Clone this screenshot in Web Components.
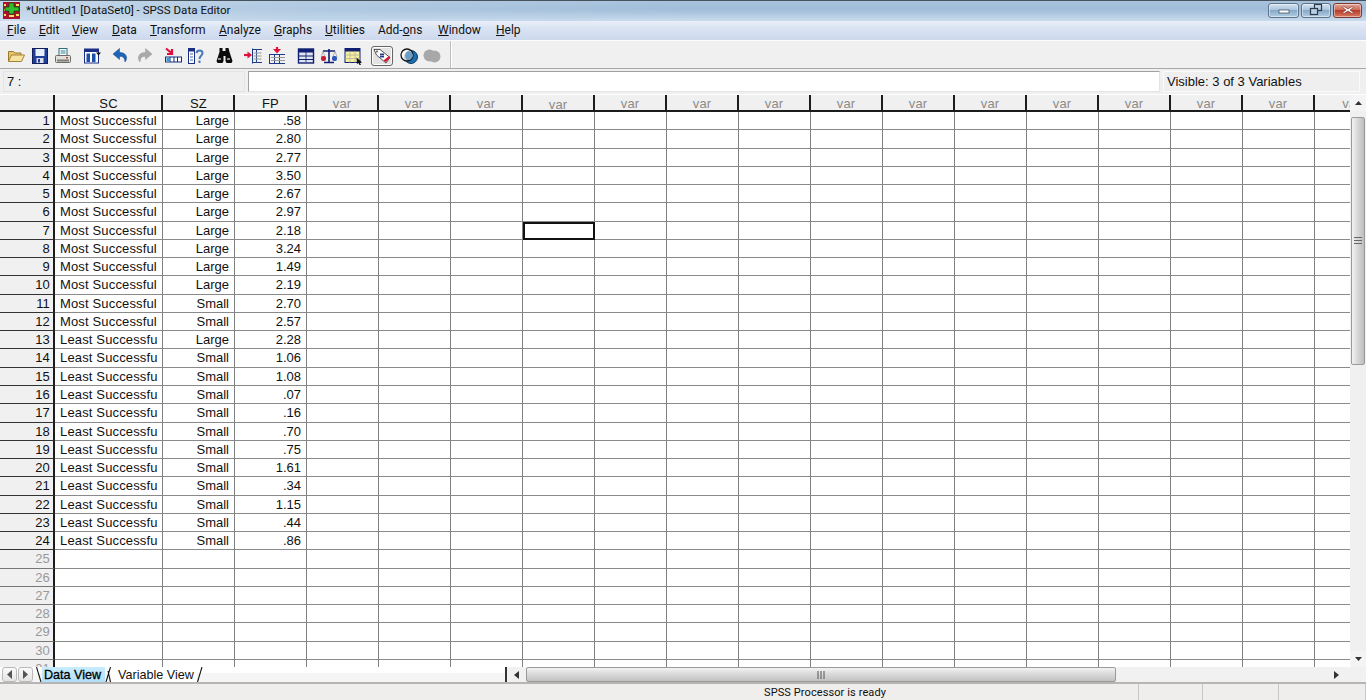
<!DOCTYPE html>
<html lang="en"><head><meta charset="utf-8"><title>SPSS Data Editor</title>
<style>html,body{margin:0;padding:0;background:#f0f0f0;overflow:hidden;width:1366px;height:700px}</style>
</head><body>
<spss-window>
  <title-bar slot="title">*Untitled1 [DataSet0] - SPSS Data Editor</title-bar>
  <menu-bar slot="menu"></menu-bar>
  <tool-bar slot="tools"></tool-bar>
  <cell-bar slot="cell" cell="7 :" visible="Visible: 3 of 3 Variables"></cell-bar>
  <data-grid slot="grid"></data-grid>
  <v-scroll slot="vscroll"></v-scroll>
  <tab-strip slot="tabs"></tab-strip>
  <status-bar slot="status">SPSS Processor is ready</status-bar>
</spss-window>
<script>
function def(name,css,html){
  customElements.define(name,class extends HTMLElement{
    connectedCallback(){
      if(this.shadowRoot)return;
      const r=this.attachShadow({mode:'open'});
      r.innerHTML='<style>'+css+'</style>'+(typeof html==='function'?html(this):html);
    }
  });
}
def('spss-window',`
:host{display:grid;width:1366px;height:700px;grid-template-columns:1350px 16px;grid-template-rows:21px 20px 28px 26px 572px 17px 16px;overflow:hidden;font-family:"Liberation Sans",Arial,sans-serif}
.w{grid-column:1/3}
`,`<div class="w"><slot name="title"></slot></div><div class="w"><slot name="menu"></slot></div><div class="w"><slot name="tools"></slot></div><div class="w"><slot name="cell"></slot></div><slot name="grid"></slot><slot name="vscroll"></slot><div class="w"><slot name="tabs"></slot></div><div class="w"><slot name="status"></slot></div>`);

def('title-bar',`
:host{display:flex;height:21px;box-sizing:border-box;align-items:center;background:linear-gradient(180deg,#46535f 0,#46535f 1px,#a9c3dc 1px,#9fbcd9 9px,#b7cde3 16px,#c9dcee 21px);position:relative}
.bg{position:absolute;inset:1px 0 0 0;background:linear-gradient(90deg,rgba(205,222,238,.75) 0,rgba(190,212,232,.55) 300px,rgba(170,198,224,0) 700px)}
.ic{margin-left:3px;width:17px;height:17px;flex:none;position:relative;display:block}
.t{position:relative;margin-left:6px;font:11.6px/21px Roboto,"Noto Sans",sans-serif;color:#111;white-space:nowrap;flex:1}
.btns{position:relative;display:flex;gap:2px;margin-right:4px;margin-top:-1px}
.b{width:30px;height:15px;box-sizing:border-box;border:1px solid #5e7389;border-radius:3px;background:linear-gradient(180deg,#d3e2f0 0,#aac4dc 45%,#88a9c8 50%,#b3cde2 100%);box-shadow:inset 0 0 0 1px rgba(255,255,255,.45);display:flex;align-items:center;justify-content:center}
.x{background:linear-gradient(180deg,#e2a598 0,#cf6a58 45%,#b63d2c 50%,#d87a62 100%);border-color:#7a3a32}
`,`<div class="bg"></div><svg class="ic" viewBox="0 0 17 17"><rect width="17" height="17" fill="#b01030"/><g fill="#f4e25a"><rect x="1" y="2" width="2" height="2"/><rect x="1" y="7" width="2" height="2"/><rect x="1" y="12" width="2" height="2"/><rect x="13" y="2" width="3" height="2"/><rect x="13" y="7" width="3" height="2"/><rect x="13" y="12" width="3" height="2"/><rect x="6" y="13" width="5" height="2"/></g><path d="M6 1h5v4h5v4h-5v3H6V9H2V5h4z" fill="#2fbf2f" stroke="#0b4d0b" stroke-width=".8"/></svg><div class="t"><slot></slot></div><div class="btns"><div class="b" style="width:31px"><svg width="12" height="8"><rect x="1" y="4" width="10" height="3" fill="#fff" stroke="#44566a" stroke-width=".8"/></svg></div><div class="b"><svg width="14" height="12"><rect x="5.500" y=".5" width="7" height="6" fill="none" stroke="#2d3c4c" stroke-width="1.200"/><rect x="1.500" y="4.500" width="7" height="6" fill="#b8cde2" stroke="#2d3c4c" stroke-width="1.200"/></svg></div><div class="b x" style="width:29px"><svg width="14" height="10"><path d="M3 1.500l4 2.500 4-2.500 1.500 1-3.500 2.500 3.500 2.500-1.500 1-4-2.500-4 2.500-1.500-1 3.500-2.500-3.500-2.500z" fill="#fff" stroke="#6d2a22" stroke-width=".6"/></svg></div></div>`);

const menus=[['F','ile',32],['E','dit',33],['V','iew',40],['D','ata',38],['T','ransform',69],['A','nalyze',55],['G','raphs',51],['U','tilities',53],['Add-','o','ns',60],['W','indow',58],['H','elp',50]];
def('menu-bar',`
:host{display:flex;height:20px;box-sizing:border-box;padding-left:7px;background:linear-gradient(180deg,#e9eff8 0,#dbe4f3 35%,#cdd8ee 100%);border-bottom:1px solid #fbfcfe;font:12px/19px Roboto,"Noto Sans",sans-serif;color:#111}
span{display:block;white-space:nowrap;flex:none}
u{text-underline-offset:1px}
`,()=>menus.map(m=>m.length===4?`<span style="width:${m[3]}px">${m[0]}<u>${m[1]}</u>${m[2]}</span>`:`<span style="width:${m[2]}px"><u>${m[0]}</u>${m[1]}</span>`).join(''));

const icons=[
`<path d="M1.500 14.500V4.500h5l1.500 1.500h6V8" fill="#e7c568" stroke="#9a7a2a"/><path d="M1.500 14.500L4.500 8H17.500l-3 6.500z" fill="#f7e3a0" stroke="#a4823a"/>`,
`<rect x="1.500" y="1.500" width="15" height="15" fill="#1f3f9a" stroke="#101f5c"/><rect x="4.500" y="2" width="9" height="7" fill="#e8eefa"/><rect x="5.500" y="11" width="7" height="5" fill="#d9dee9"/><rect x="7" y="12" width="2" height="3.500" fill="#1f3f9a"/>`,
`<rect x="5" y="1.500" width="8" height="7" fill="#fff" stroke="#2f6f80"/><path d="M6.500 4h5M6.500 6h5" stroke="#2f7f90"/><rect x="1.500" y="8.500" width="15" height="7" rx="1" fill="#e0e0d8" stroke="#6b6b66"/><rect x="3" y="12.500" width="12" height="2" fill="#7c7c78"/><rect x="12" y="10" width="2" height="1.500" fill="#b44"/>`,
`<rect x="1.500" y="2" width="14" height="14" fill="#fff" stroke="#1c2f86"/><rect x="1.500" y="2" width="14" height="3" fill="#1c2f86"/><rect x="3.500" y="6.500" width="3.500" height="8.500" fill="#1c4fa8"/><rect x="9" y="6.500" width="3.500" height="8.500" fill="#1c4fa8"/><path d="M13 5.500h5l-2.500 3z" fill="#111"/>`,
`<path d="M7.500 1.500L1 7l6.500 5.500V9.500c3.500-.4 5 1 5.500 5.500C17 10 13 5 7.500 5.500z" fill="#1d64b8" stroke="#0f4a90" stroke-width=".5"/>`,
`<path d="M10.500 1.500L17 7l-6.500 5.500V9.500c-3.500-.4-5 1-5.500 5.500C1 10 5 5 10.500 5.500z" fill="#a9a9a9" stroke="#9a9a9a" stroke-width=".5"/>`,
`<path d="M2 1.500l6 5M8 2v5H3" stroke="#e0103a" stroke-width="2.200" fill="none"/><rect x="1.500" y="10" width="16" height="5" fill="#fff" stroke="#0f2f7f"/><path d="M6 10v5M10 10v5M13.500 10v5" stroke="#0f2f7f"/><rect x="2.500" y="11" width="3" height="3" fill="#2e9bd6"/>`,
`<rect x="1.500" y="1.500" width="6" height="15" fill="#fff" stroke="#1c2f86"/><rect x="1.500" y="1.500" width="6" height="3" fill="#1c2f86"/><path d="M3 7h3M3 10h3M3 13h3" stroke="#46a"/><path d="M9.500 6c.5-3.500 6-3.500 6 0 0 3-3 2.500-3 6" fill="none" stroke="#4a78b8" stroke-width="2"/><rect x="11.500" y="13.500" width="2" height="2.500" fill="#4a78b8"/>`,
`<path d="M4.500 1h3v3h3V1h3l1 4 3 9-1 2h-5l-1-2V9h-2v5l-1 2h-5l-1-2 3-9z" fill="#0c0c0c"/><rect x="3" y="11" width="3" height="2" fill="#fff" opacity=".55"/><rect x="12" y="11" width="3" height="2" fill="#fff" opacity=".55"/>`,
`<path d="M0 8h4.500" stroke="#e0103a" stroke-width="2.200"/><path d="M3.500 4.500l4.500 3.500-4.500 3.500z" fill="#e0103a"/><path d="M8.500 1.500v15M8 2.500h10M8 15.500h10" stroke="#1c3a8a" fill="none"/><path d="M12.500 2v14" stroke="#2a4a90"/><path d="M9.500 6h8M9.500 9h8M9.500 12h8" stroke="#9a9a9a"/>`,
`<path d="M9 0v3" stroke="#e0103a" stroke-width="2.200"/><path d="M5 2h8L9 6.500z" fill="#e0103a"/><path d="M1 7.500h16M1 16.500h16M1.500 7v10M6.500 7v10M11.500 7v10" stroke="#1c3a8a" fill="none"/><path d="M3 10.500h14M3 13.500h14" stroke="#9a9a9a"/>`,
`<rect x="1.500" y="2" width="15" height="14" fill="#dfe4ee" stroke="#101f72" stroke-width="1.400"/><rect x="2" y="2" width="14" height="3.500" fill="#101f72"/><path d="M2 9h14M2 12.500h14" stroke="#101f72" stroke-width="1.200"/><path d="M9 5v10" stroke="#101f72" stroke-width=".8"/>`,
`<path d="M9 2v13M3 4h12M4 15.500h10" stroke="#101f72" stroke-width="1.600"/><path d="M3 4l-1.500 6M3 4l2 6M15 4l-2 6M15 4l2 6" stroke="#8a8a8a" stroke-width=".6"/><rect x="1" y="9" width="5" height="5" rx="2" fill="#c41f35"/><rect x="12" y="9" width="5" height="5" rx="2" fill="#2c56b8"/>`,
`<rect x="1" y="1.500" width="15" height="14" fill="#f7efa0" stroke="#101f72"/><rect x="1" y="1.500" width="15" height="3" fill="#101f72"/><path d="M1.500 8h14M1.500 11.500h14M6 4.500v11M11 4.500v11" stroke="#bdbd9a"/><path d="M12.500 10.500l5.500 5-2 .5 1 2-1.500 0-1-2-1.500 1z" fill="#111"/>`
];
const iconSvg=p=>`<svg width="18" height="18" viewBox="0 0 18 18">${p}</svg>`;
def('tool-bar',`
:host{display:flex;height:28px;box-sizing:border-box;align-items:center;padding:2px 0 0 7px;background:#f0f0f0;border-bottom:1px solid #a8a8a8;position:relative}
.i{flex:none;width:18px;height:18px;display:block}
.i svg{display:block}
.p{flex:none;margin:0 -2px 0 0;width:22px;height:20px;box-sizing:border-box;border:1.500px solid #666;border-radius:3px;background:#e3e3e3;box-shadow:inset 0 0 0 1px #fff;display:flex;align-items:center;justify-content:center}
.sep{width:1px;height:27px;background:#bdbdbd;margin:-2px 0 0 9px;border-right:1px solid #fff;flex:none}
`,()=>{
  const gaps=[0,6,5,11,11,5,11,5,10,11,6,11,5,6];
  let h=icons.map((c,i)=>`<span class="i" style="margin-left:${gaps[i]}px">${iconSvg(c)}</span>`).join('');
  h+=`<span class="p" style="margin-left:9px"><svg width="18" height="16" viewBox="0 0 18 16"><path d="M1 1.500h6l10 8-4 5.500L3.500 7z" fill="#fff" stroke="#555"/><circle cx="4" cy="3.500" r="1" fill="#555"/><path d="M10.500 12.500l5.500-4.500 1 1.500-4 4.500z" fill="#e0102f"/><path d="M7 6.500h4M7 8.500h4M8 5v5M10 5v5" stroke="#1c2f86" stroke-width=".9"/></svg></span>`;
  h+=`<span class="i" style="margin-left:9px"><svg width="18" height="18" viewBox="0 0 18 18"><circle cx="11" cy="10" r="6.500" fill="#1c6fb4" stroke="#0d3a66"/><circle cx="7" cy="8" r="6" fill="#fff" fill-opacity=".75" stroke="#111" stroke-width="1.300"/><path d="M7 13a5.500 5.500 0 0 1 1-9 6 6 0 0 1 5 4 5 5 0 0 1-6 5z" fill="#6d9cc2"/></svg></span>`;
  h+=`<span class="i" style="margin-left:5px"><svg width="18" height="18" viewBox="0 0 18 18"><circle cx="6.500" cy="8.500" r="6" fill="#a8a8a8"/><circle cx="11.500" cy="9.500" r="6" fill="#a8a8a8"/></svg></span>`;
  h+=`<span class="sep"></span>`;
  return h;
});

def('cell-bar',`
:host{display:flex;height:26px;box-sizing:border-box;padding:2px 6px 2px 3px;gap:3px;background:#f0f0f0;border-bottom:1px solid #fff;font:13px/20px "Liberation Sans",Arial,sans-serif;color:#111}
div{box-sizing:border-box;height:21px;padding-left:4px;white-space:nowrap}
.a{width:242px;background:#efefef;border:1px solid #e4e4e4;padding-left:3px}
.b{width:912px;background:#fff;border-top:1px solid #a0a0a0;border-left:1px solid #a0a0a0;border-right:1px solid #e4e4e4;border-bottom:1px solid #e4e4e4}
.c{width:197px;background:#efefef;border:1px solid #fbfbfb;padding-left:3px}
`,t=>`<div class="a">${t.getAttribute('cell')}</div><div class="b"></div><div class="c">${t.getAttribute('visible')}</div>`);

const L='Large',S='Small',M='Most Successful',E='Least Successfu';
const rows=[[M,L,'.58'],[M,L,'2.80'],[M,L,'2.77'],[M,L,'3.50'],[M,L,'2.67'],[M,L,'2.97'],[M,L,'2.18'],[M,L,'3.24'],[M,L,'1.49'],[M,L,'2.19'],[M,S,'2.70'],[M,S,'2.57'],[E,L,'2.28'],[E,S,'1.06'],[E,S,'1.08'],[E,S,'.07'],[E,S,'.16'],[E,S,'.70'],[E,S,'.75'],[E,S,'1.61'],[E,S,'.34'],[E,S,'1.15'],[E,S,'.44'],[E,S,'.86']];
def('data-grid',`
:host{display:block;height:572px;width:1350px;overflow:hidden;background:#fff;font:13px "Liberation Sans",Arial,sans-serif;letter-spacing:.15px;color:#111}
.g{display:grid;grid-template-columns:55px 108px repeat(17,72px);grid-template-rows:17px;grid-auto-rows:18.27px;width:1387px}
.g>div{box-sizing:border-box;overflow:hidden;white-space:nowrap;line-height:18px;border-right:1px solid #808080;border-bottom:1px solid #8a8a8a;padding:0 4px 0 5px}
.g>.h{background:#f0f0f0;border-right:2px solid #1c1c1c;border-bottom:2px solid #1c1c1c;text-align:center;line-height:17px;padding:0}
.g>.h.c{padding-left:1px}
.g>.h.v{color:#8b8b8b}
.g>.h.last{padding-left:3px}
.g>.rh{background:#f0f0f0;border-right:2px solid #1c1c1c;border-bottom:1px solid #333;text-align:right;padding-right:3px}
.g>.rh.e{color:#999;border-bottom-color:#777}
.g>.n{text-align:right;letter-spacing:0;padding-right:5px}
.g>.sel{outline:2px solid #111;outline-offset:-2px}
`,()=>{
  let h='<div class="g">';
  h+='<div class="h"></div><div class="h c">SC</div><div class="h c">SZ</div><div class="h c">FP</div>';
  for(let i=0;i<15;i++)h+=`<div class="h v${i===14?' last':''}"${i===3?' style="padding-top:1px"':''}>var</div>`;
  for(let r=0;r<31;r++){
    const d=rows[r];
    h+=`<div class="rh${d?'':' e'}">${r+1}</div>`;
    h+=`<div>${d?d[0]:''}</div><div class="n">${d?d[1]:''}</div><div class="n">${d?d[2]:''}</div>`;
    for(let i=0;i<15;i++)h+=`<div${(r===6&&i===3)?' class="sel"':''}></div>`;
  }
  return h+'</div>';
});

def('v-scroll',`
:host{display:flex;flex-direction:column;height:572px;background:#f0f0f0;box-sizing:border-box}
.u,.d{height:16px;flex:none;display:flex;align-items:center;justify-content:center;background:#f4f4f4}
.gap{height:6px;flex:none}
.th{height:248px;flex:none;margin:0 1px;box-sizing:border-box;border:1px solid #9a9a9a;border-radius:2px;background:linear-gradient(90deg,#f2f2f2,#d6d6d6 50%,#bdbdbd);display:flex;align-items:center;justify-content:center}
.sp{flex:1}
`,`<div class="u"><svg width="7" height="4"><path d="M3.500 0L7 4H0z" fill="#333"/></svg></div><div class="gap"></div><div class="th"><svg width="8" height="8"><path d="M0 .5h8M0 3.500h8M0 6.500h8" stroke="#666"/></svg></div><div class="sp"></div><div class="d"><svg width="7" height="4"><path d="M0 0h7L3.500 4z" fill="#333"/></svg></div>`);

def('tab-strip',`
:host{display:flex;height:17px;box-sizing:border-box;background:linear-gradient(180deg,#fff 0,#fff 6px,#f5f5f5 6px);border-bottom:2px solid #b5b5b5;font:13px/16px "Liberation Sans",Arial,sans-serif;color:#111}
.nav{flex:none;width:15px;height:15px;margin-left:2px;box-sizing:border-box;border:1px solid #b9b9b9;border-radius:3px;background:linear-gradient(#fafafa,#e4e4e4);display:flex;align-items:center;justify-content:center}
.tabs{flex:none;width:469px;margin-left:3px;display:flex;height:15px;align-items:stretch}
.slant{flex:none;width:6px;height:15px;display:block}
.t1{flex:none;width:63px;box-sizing:border-box;padding-left:2px;background:linear-gradient(#c8ecfd,#b2e0f9);color:#000;-webkit-text-stroke:.3px #000;font-size:12.6px;white-space:nowrap}
.t2{flex:none;width:86px;padding-left:7px;box-sizing:border-box;background:#fff;white-space:nowrap;font-size:12.6px}
.sb{flex:1;display:flex;align-items:stretch;height:15px;background:#f1f1f1;border-left:2px solid #333;box-sizing:border-box}
.btn{flex:none;width:19px;display:flex;align-items:center;justify-content:center}
.th{flex:none;width:590px;box-sizing:border-box;border:1px solid #9a9a9a;border-radius:2px;background:linear-gradient(#f3f3f3,#d8d8d8 50%,#c2c2c2);display:flex;align-items:center;justify-content:center}
.sp{flex:1}
`,`<div class="nav"><svg width="6" height="9"><path d="M5 0v9L0 4.500z" fill="#555"/></svg></div><div class="nav" style="margin-left:1px"><svg width="6" height="9"><path d="M0 0v9l5-4.500z" fill="#555"/></svg></div><div class="tabs"><svg class="slant" viewBox="0 0 6 15"><path d="M.5 0L5 15" stroke="#111" stroke-width="1.100"/></svg><div class="t1">Data View</div><svg class="slant" viewBox="0 0 6 15"><path d="M5.500 0L1 15M3 4L5.500 15" stroke="#111" stroke-width="1.100" fill="none"/></svg><div class="t2">Variable View</div><svg class="slant" viewBox="0 0 6 15"><path d="M5 0L.5 15" stroke="#111" stroke-width="1.100"/></svg></div><div class="sb"><div class="btn"><svg width="5" height="8"><path d="M5 0v8L0 4z" fill="#333"/></svg></div><div class="th"><svg width="9" height="8"><path d="M1 0v8M4 0v8M7 0v8" stroke="#555"/></svg></div><div class="sp"></div><div class="btn" style="width:32px;justify-content:flex-start"><svg width="5" height="8"><path d="M0 0v8l5-4z" fill="#333"/></svg></div></div>`);

def('status-bar',`
:host{display:block;height:16px;background:#f0eded;font:11px/18px Roboto,"Noto Sans",sans-serif;letter-spacing:.1px;color:#111}
.r{display:grid;grid-template-columns:1139px 64px 76px 87px;height:16px}
.r>div{box-sizing:border-box;border-right:1px solid #c8c8c8;white-space:nowrap;overflow:hidden}
.m{padding-left:764px}
`,`<div class="r"><div class="m"><slot></slot></div><div></div><div></div><div></div></div>`);
</script>
</body></html>
